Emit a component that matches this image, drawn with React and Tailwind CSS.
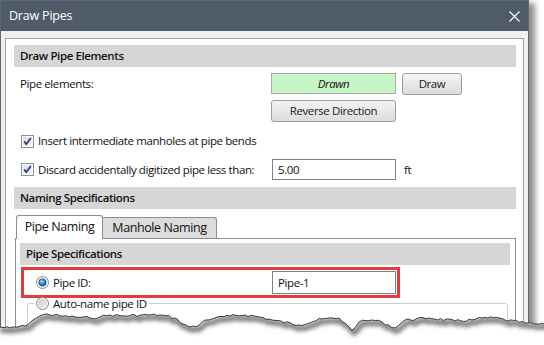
import React from "react";

const FONT = { fontFamily: '"Open Sans", "Noto Sans", sans-serif' };

const base = [
  [-2, 327], [10, 328], [25, 326], [33, 320], [40, 316], [47, 314], [60, 316], [75, 317],
  [90, 318], [100, 317], [110, 315], [125, 316], [140, 315], [160, 315], [175, 318], [183, 324],
  [190, 327], [198, 326], [205, 320], [215, 318], [230, 316], [245, 315], [260, 317], [272, 320],
  [299, 325], [322, 319], [339, 318], [349, 327], [352, 330], [359, 322], [372, 320], [382, 322],
  [395, 328], [405, 320], [429, 318], [455, 321], [472, 320], [482, 318], [499, 318], [505, 320],
  [525, 323], [536, 324], [546, 325],
];

function buildLine() {
  let seed = 7;
  const rnd = () => {
    seed = (seed * 9301 + 49297) % 233280;
    return seed / 233280;
  };
  const pts = [];
  for (let i = 0; i < base.length - 1; i++) {
    const [x0, y0] = base[i];
    const [x1, y1] = base[i + 1];
    const steps = Math.max(1, Math.round((x1 - x0) / 3));
    for (let s = 0; s < steps; s++) {
      const t = s / steps;
      const x = x0 + (x1 - x0) * t;
      const y = y0 + (y1 - y0) * t + (s === 0 ? 0 : (rnd() - 0.5) * 2.6);
      pts.push([x.toFixed(1), y.toFixed(1)]);
    }
  }
  pts.push(base[base.length - 1]);
  return pts.map((p, i) => (i === 0 ? "M" : "L") + p[0] + "," + p[1]).join(" ");
}

const LINE = buildLine();

function Torn() {
  return (
    <svg className="absolute left-0 top-0 pointer-events-none" width="544" height="345" viewBox="0 0 544 345">
      <defs>
        <filter id="blr" x="-10%" y="-50%" width="120%" height="300%">
          <feGaussianBlur stdDeviation="2.2" />
        </filter>
        <clipPath id="below">
          <path d={LINE + " L546,345 L-2,345 Z"} />
        </clipPath>
      </defs>
      <path d={LINE + " L546,345 L-2,345 Z"} fill="#ffffff" />
      <g clipPath="url(#below)">
        <path d={LINE} transform="translate(2,3)" stroke="#000" strokeOpacity="0.55" strokeWidth="5" fill="none" filter="url(#blr)" />
      </g>
      <path d={LINE} stroke="#3a3a3a" strokeWidth="1" fill="none" />
    </svg>
  );
}

function Checkbox() {
  return (
    <svg width="13" height="13" viewBox="0 0 13 13" className="shrink-0">
      <defs>
        <linearGradient id="cbg" x1="0" y1="0" x2="1" y2="1">
          <stop offset="0" stopColor="#dcdce4" />
          <stop offset="1" stopColor="#f6f6f8" />
        </linearGradient>
      </defs>
      <rect x="0.5" y="0.5" width="12" height="12" fill="#fff" stroke="#8e8f8f" />
      <rect x="2" y="2" width="9" height="9" fill="url(#cbg)" />
      <path d="M3.2 6.4 L5.3 9.2 L9.8 3.0" stroke="#2b3a8c" strokeWidth="1.8" fill="none" strokeLinejoin="round" />
    </svg>
  );
}

function Radio({ on }) {
  return (
    <svg width="13" height="13" viewBox="0 0 13 13" className="shrink-0">
      <defs>
        <radialGradient id="rOn" cx="0.4" cy="0.35" r="0.7">
          <stop offset="0" stopColor="#a8e4ff" />
          <stop offset="0.5" stopColor="#2d90d8" />
          <stop offset="1" stopColor="#0c4c86" />
        </radialGradient>
        <linearGradient id="rOff" x1="0" y1="0" x2="1" y2="1">
          <stop offset="0" stopColor="#c8c8c8" />
          <stop offset="1" stopColor="#f4f4f4" />
        </linearGradient>
      </defs>
      <circle cx="6.5" cy="6.5" r="6" fill="#f4f4f4" stroke="#8a8a8a" />
      <circle cx="6.5" cy="6.5" r="4.5" fill="url(#rOff)" />
      {on && <circle cx="6.5" cy="6.5" r="3.6" fill="url(#rOn)" stroke="#1a3f6a" strokeWidth="0.6" />}
    </svg>
  );
}

function Btn({ w, children }) {
  return (
    <div className={`${w} h-[22px] flex items-center justify-center rounded-[3px] border border-[#9d9d9d] bg-gradient-to-b from-[#f4f4f4] to-[#dcdcdc] text-[#1a1a1a]`}>
      {children}
    </div>
  );
}

function Header({ children, cls = "" }) {
  return (
    <div className={`h-[22px] shrink-0 bg-[#d6d6d6] flex items-center pl-[6px] font-semibold text-[#111] ${cls}`}>{children}</div>
  );
}

export default function App() {
  return (
    <div className="w-[544px] h-[345px] bg-white relative overflow-hidden text-[11.5px] tracking-[-0.4px] text-[#111]" style={FONT}>
      <div className="w-[529px] h-[400px] border border-[#5d6774] bg-[#f0f0f0] shadow-[6px_3px_6px_rgba(0,0,0,0.45)] flex flex-col">
        <div className="h-[30px] shrink-0 bg-[#4f5b69] flex items-center justify-between pl-[8px] pr-[8px] text-white text-[12.5px]">
          <span className="tracking-[-0.2px]">Draw Pipes</span>
          <svg width="11" height="11" viewBox="0 0 11 11">
            <path d="M0.5 0.5 L10.5 10.5 M10.5 0.5 L0.5 10.5" stroke="#fff" strokeWidth="1.1" />
          </svg>
        </div>
        <div className="flex-1 pt-[7px] px-[4px]">
          <div className="h-full border border-[#a0a0a0] bg-white pt-[6px] pl-[8px] pr-[7px] flex flex-col">
            <Header>Draw Pipe Elements</Header>
            <div className="flex pl-[6px] mt-[6px] h-[21px] items-center shrink-0">
              <span className="w-[251px]">Pipe elements:</span>
              <div className="w-[125px] h-[21px] border border-[#a8a8a8] bg-[#c6f5c6] flex items-center justify-center italic">Drawn</div>
              <div className="ml-[6px]"><Btn w="w-[60px]">Draw</Btn></div>
            </div>
            <div className="flex pl-[257px] mt-[6px] shrink-0">
              <Btn w="w-[125px]">Reverse Direction</Btn>
            </div>
            <div className="flex items-center pl-[7px] mt-[12px] h-[14px] gap-[4px] shrink-0">
              <Checkbox />
              <span>Insert intermediate manholes at pipe bends</span>
            </div>
            <div className="flex items-center pl-[7px] mt-[11px] h-[21px] shrink-0">
              <div className="w-[251px] flex items-center gap-[4px]">
                <Checkbox />
                <span>Discard accidentally digitized pipe less than:</span>
              </div>
              <div className="w-[124px] h-[21px] border border-[#7d7d95] flex items-center pl-[5px]">5.00</div>
              <span className="ml-[8px]">ft</span>
            </div>
            <Header cls="mt-[7px]">Naming Specifications</Header>
            <div className="flex items-end mt-[6px] pl-[2px] h-[23px] shrink-0">
              <div className="w-[87px] h-[24px] border border-b-0 border-[#8c8c9c] rounded-t-[3px] bg-white flex items-center justify-center text-[12.5px] relative top-[1px] z-10">Pipe Naming</div>
              <div className="w-[114px] h-[21px] border border-l-0 border-b-0 border-[#8c8c9c] rounded-tr-[3px] bg-[#dcdcdc] flex items-center justify-center text-[12.5px]">Manhole Naming</div>
            </div>
            <div className="flex-1 ml-[1px] border border-[#8c8c9c] pt-[4px] pl-[4px] pr-[5px] flex flex-col">
              <Header>Pipe Specifications</Header>
              <div className="mt-[2px] ml-[1px] w-[379px] h-[31px] shrink-0 border-[3px] border-[#e8383d] flex items-center pl-[12px]">
                <div className="w-[236px] flex items-center gap-[4px]">
                  <Radio on />
                  <span>Pipe ID:</span>
                </div>
                <div className="w-[124px] h-[23px] border border-[#7d7d95] flex items-center pl-[5px]">Pipe-1</div>
              </div>
              <fieldset className="-mt-[3px] ml-[7px] w-[481px] h-[60px] border border-[#cdcdcd] rounded-[3px] px-0">
                <legend className="ml-[6px] px-[2px] flex items-center gap-[4px]">
                  <Radio />
                  <span>Auto-name pipe ID</span>
                </legend>
              </fieldset>
            </div>
          </div>
        </div>
      </div>
      <Torn />
    </div>
  );
}
